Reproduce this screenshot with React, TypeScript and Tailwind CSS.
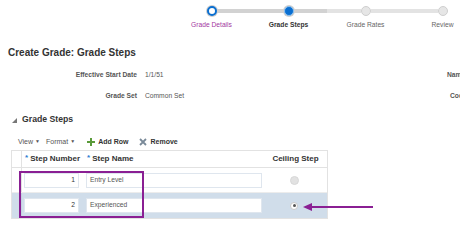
import React from "react";

function TrainStep({ label, state, first, last }: { label: string; state: "visited" | "current" | "todo"; first?: boolean; last?: boolean }) {
  const leftLine = first ? "bg-transparent" : state === "todo" ? "bg-[#e3e3e3]" : "bg-[#d2d2d2]";
  const rightLine = last ? "bg-transparent" : state === "todo" ? "bg-[#e3e3e3]" : "bg-[#d2d2d2]";
  const labelCls =
    state === "visited"
      ? "text-[#a3389f]"
      : state === "current"
      ? "text-[#333] font-bold"
      : "text-[#666]";
  return (
    <div className="w-[77px] shrink-0 flex flex-col items-center">
      <div className="flex items-center w-full mt-[6px]">
        <div className={`h-[4px] flex-1 ${leftLine}`} />
        {state === "visited" && (
          <div className="w-[10px] h-[10px] rounded-full border-[2px] border-[#0a6fd1] bg-white shadow-[0_0_0_1px_#cfcfcf]" />
        )}
        {state === "current" && (
          <div className="w-[10px] h-[10px] rounded-full bg-[#0a6fd1] border-[1px] border-[#8fc2ef] shadow-[0_0_0_1px_#d0d0d0]" />
        )}
        {state === "todo" && (
          <div className="w-[10px] h-[10px] rounded-full bg-[#e6e6e6] border border-[#cfcfcf]" />
        )}
        <div className={`h-[4px] flex-1 ${rightLine}`} />
      </div>
      <div className={`mt-[4px] text-[6.7px] leading-[9px] whitespace-nowrap ${labelCls}`}>{label}</div>
    </div>
  );
}

function Radio({ checked }: { checked?: boolean }) {
  if (checked) {
    return (
      <div className="w-[8px] h-[8px] rounded-full bg-white border border-[#c9c9c9] flex items-center justify-center">
        <div className="w-[3px] h-[3px] rounded-full bg-[#555]" />
      </div>
    );
  }
  return <div className="w-[9px] h-[9px] rounded-full bg-[#e2e2e2] border border-[#d8d8d8]" />;
}

export default function App() {
  const rows = [
    { num: "1", name: "Entry Level", selected: false },
    { num: "2", name: "Experienced", selected: true },
  ];
  return (
    <div
      className="relative w-[460px] h-[226px] overflow-hidden bg-white text-[#333]"
      style={{ fontFamily: '"Liberation Sans", Arial, sans-serif' }}
    >
      {/* train */}
      <div className="flex pl-[173px] h-[32px]">
        <TrainStep label="Grade Details" state="visited" first />
        <TrainStep label="Grade Steps" state="current" />
        <TrainStep label="Grade Rates" state="todo" />
        <TrainStep label="Review" state="todo" last />
      </div>

      <div className="mt-[14px] pl-[8px] text-[10px] leading-[14px] font-bold text-[#333]">Create Grade: Grade Steps</div>

      <div className="mt-[10px] flex text-[6.7px] leading-[10px]">
        <div className="w-[137px] shrink-0 text-right font-bold text-[#555]">Effective Start Date</div>
        <div className="w-[310px] shrink-0 pl-[8px] text-[#555]">1/1/51</div>
        <div className="shrink-0 font-bold text-[#555] whitespace-nowrap">Name</div>
      </div>
      <div className="mt-[11px] flex text-[6.7px] leading-[10px]">
        <div className="w-[137px] shrink-0 text-right font-bold text-[#555]">Grade Set</div>
        <div className="w-[313px] shrink-0 pl-[8px] text-[#555]">Common Set</div>
        <div className="shrink-0 font-bold text-[#555] whitespace-nowrap">Code</div>
      </div>

      <div className="mt-[13px] pl-[12px] flex items-center gap-[5px] h-[12px]">
        <svg width="5" height="5" viewBox="0 0 5 5">
          <path d="M5 0 L5 5 L0 5 Z" fill="#777" />
        </svg>
        <span className="text-[8.7px] font-bold text-[#333]">Grade Steps</span>
      </div>

      <div className="mt-[10px] pl-[18px] flex items-center h-[12px] text-[7px] text-[#555]">
        <span>View</span>
        <span className="ml-[2px] text-[5px]">▼</span>
        <span className="ml-[6px]">Format</span>
        <span className="ml-[2px] text-[5px]">▼</span>
        <svg className="ml-[12px]" width="8" height="8" viewBox="0 0 8 8">
          <rect x="3" y="0" width="2" height="8" fill="#5a9a3a" />
          <rect x="0" y="3" width="8" height="2" fill="#5a9a3a" />
        </svg>
        <span className="ml-[3px] font-bold text-[#333]">Add Row</span>
        <svg className="ml-[11px]" width="8" height="8" viewBox="0 0 8 8">
          <path d="M1 1 L7 7 M7 1 L1 7" stroke="#7a8a99" strokeWidth="1.8" />
        </svg>
        <span className="ml-[3px] font-bold text-[#333]">Remove</span>
      </div>

      {/* table */}
      <div className="mt-[2px] ml-[11px] w-[317px] border border-[#e2e2e2]">
        <div className="flex h-[17px] border-b border-[#e2e2e2] text-[8px] font-bold text-[#333]">
          <div className="w-[10px] border-r border-[#e2e2e2]" />
          <div className="w-[60px] flex items-center justify-end pr-[2px]">
            <span className="text-[#2a7bd1] mr-[2px] -mt-[3px]">*</span>Step Number
          </div>
          <div className="w-[182px] flex items-center pl-[5px]">
            <span className="text-[#2a7bd1] mr-[2px] -mt-[3px]">*</span>Step Name
          </div>
          <div className="flex-1 flex items-center justify-center">Ceiling Step</div>
        </div>
        {rows.map((r) => (
          <div key={r.num} className={`flex items-center h-[25px] text-[6.7px] ${r.selected ? "bg-[#d0ddea]" : "bg-white border-b border-[#ececec]"}`}>
            <div className={`w-[10px] self-stretch border-r ${r.selected ? "border-[#c3d2e2]" : "border-[#e2e2e2]"}`} />
            <div className="ml-[2px] w-[55px] h-[15px] bg-white border border-[#dfe6ee] flex items-center justify-end pr-[3px] text-[#333]">{r.num}</div>
            <div className="ml-[7px] w-[176px] h-[15px] bg-white border border-[#dfe6ee] flex items-center pl-[3px] text-[#555]">{r.name}</div>
            <div className="flex-1 flex justify-center pr-[1px]">
              <Radio checked={r.selected} />
            </div>
          </div>
        ))}
      </div>

      {/* annotations */}
      <div className="absolute left-[19px] top-[171px] w-[125px] h-[47px] border-[2px] border-[#8a1f93]" />
      <svg className="absolute left-[300px] top-[201px]" width="76" height="12" viewBox="0 0 76 12">
        <line x1="8" y1="6" x2="73" y2="6" stroke="#8a1f93" strokeWidth="2" />
        <path d="M3 6 L12 2 L12 10 Z" fill="#8a1f93" />
      </svg>
    </div>
  );
}
